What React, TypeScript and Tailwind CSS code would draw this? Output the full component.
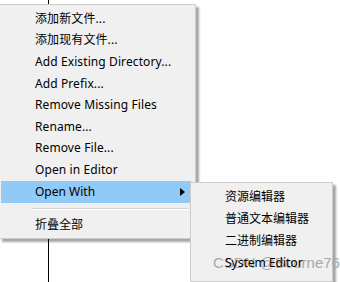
import React from "react";

const font = { fontFamily: '"Segoe UI", "Noto Sans", "Noto Sans CJK SC", sans-serif' };

const items = [
  "添加新文件...",
  "添加现有文件...",
  "Add Existing Directory...",
  "Add Prefix...",
  "Remove Missing Files",
  "Rename...",
  "Remove File...",
  "Open in Editor",
];

const subItems = ["资源编辑器", "普通文本编辑器", "二进制编辑器", "System Editor"];

export default function App() {
  return (
    <div className="relative w-[340px] h-[282px] overflow-hidden bg-white text-[12px] text-black" style={font}>
      {/* tree line behind the menu */}
      <div className="absolute left-[48px] top-0 h-full w-px bg-black" />

      {/* main context menu */}
      <div className="absolute left-[-1px] top-[4px] w-[197px] border border-[#cccccc] bg-[#f0f0f0] pt-[3px] pb-[2px] pl-px pr-[4px] shadow-[3px_3px_2px_rgba(0,0,0,0.35)]">
        {items.map((t) => (
          <div key={t} className="flex h-[21.6px] items-center pl-[34px] tracking-[0.1px]">{t}</div>
        ))}
        <div className="flex h-[22px] items-center justify-between bg-[#91c9f7] pl-[34px] pr-[6px]">
          <span>Open With</span>
          <svg width="5" height="8" viewBox="0 0 5 8"><path d="M0 0 L5 4 L0 8 Z" fill="#000" /></svg>
        </div>
        <div className="ml-[30px] mr-[2px] my-[5px] h-[2px] border-t border-[#d7d7d7] border-b-white border-b" />
        <div className="flex h-[21px] items-center pl-[34px]">折叠全部</div>
      </div>

      {/* submenu */}
      <div className="absolute left-[190px] top-[182px] w-[143px] h-[100px] border border-[#cccccc] bg-[#f0f0f0] py-[3px] shadow-[3px_3px_2px_rgba(0,0,0,0.35)]">
        {/* watermark */}
        <div className="absolute left-[22px] top-[72px] whitespace-nowrap text-[15px] leading-none text-[#a8a8a8]" style={{ fontFamily: '"Liberation Sans", sans-serif' }}>
          CSDN @Bourne76
        </div>
        <div className="relative flex flex-col">
          {subItems.map((t) => (
            <div key={t} className="flex h-[22px] items-center pl-[34px]">{t}</div>
          ))}
        </div>
      </div>
    </div>
  );
}
